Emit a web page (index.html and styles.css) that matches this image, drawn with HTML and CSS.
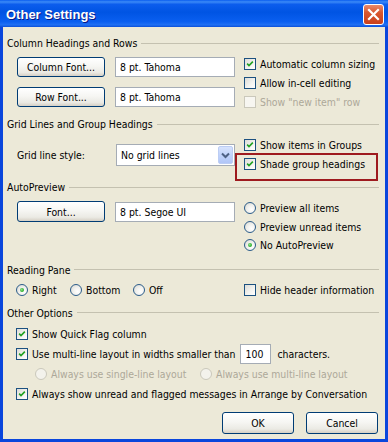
FILE: index.html
```html
<!DOCTYPE html>
<html>
<head>
<meta charset="utf-8">
<title>Other Settings</title>
<link rel="stylesheet" href="styles.css">
</head>
<body>
<div class="window">
  <div class="titlebar">
    <span class="title">Other Settings</span>
    <div class="close"><svg width="13" height="13" viewBox="0 0 13 13"><path d="M2 2 L11 11 M11 2 L2 11" stroke="#fff" stroke-width="2.2" stroke-linecap="square"/></svg></div>
  </div>
  <div class="content">
    <section class="group g1">
      <div class="ghead"><span>Column Headings and Rows</span></div>
      <div class="gbody">
        <div class="left stack1">
          <div class="frow"><button class="btn">Column Font...</button><div class="field">8 pt. Tahoma</div></div>
          <div class="frow"><button class="btn">Row Font...</button><div class="field">8 pt. Tahoma</div></div>
        </div>
        <div class="right r1">
          <div class="opt"><span class="cb"><svg viewBox="0 0 12 12"><path d="M2.6 5.6 L4.8 7.9 L9.4 3.2" fill="none" stroke="#21a121" stroke-width="1.9"/></svg></span>Automatic column sizing</div>
          <div class="opt"><span class="cb"></span>Allow in-cell editing</div>
          <div class="opt disabled"><span class="cb"></span>Show "new item" row</div>
        </div>
      </div>
    </section>

    <section class="group g2">
      <div class="ghead"><span>Grid Lines and Group Headings</span></div>
      <div class="gbody">
        <div class="left grid-left">
          <span class="lbl">Grid line style:</span>
          <div class="select"><span>No grid lines</span><span class="arrow"><svg width="9" height="7" viewBox="0 0 9 7"><path d="M1 1.5 L4.5 5 L8 1.5" fill="none" stroke="#4d6185" stroke-width="2"/></svg></span></div>
        </div>
        <div class="right r2">
          <div class="opt"><span class="cb"><svg viewBox="0 0 12 12"><path d="M2.6 5.6 L4.8 7.9 L9.4 3.2" fill="none" stroke="#21a121" stroke-width="1.9"/></svg></span>Show items in Groups</div>
          <div class="opt"><span class="cb"><svg viewBox="0 0 12 12"><path d="M2.6 5.6 L4.8 7.9 L9.4 3.2" fill="none" stroke="#21a121" stroke-width="1.9"/></svg></span>Shade group headings</div>
        </div>
      </div>
    </section>

    <section class="group g3">
      <div class="ghead"><span>AutoPreview</span></div>
      <div class="gbody">
        <div class="left stack3">
          <div class="frow"><button class="btn tall">Font...</button><div class="field">8 pt. Segoe UI</div></div>
        </div>
        <div class="right r3">
          <div class="opt"><span class="rd"></span>Preview all items</div>
          <div class="opt"><span class="rd"></span>Preview unread items</div>
          <div class="opt"><span class="rd on"></span>No AutoPreview</div>
        </div>
      </div>
    </section>

    <section class="group g4">
      <div class="ghead"><span>Reading Pane</span></div>
      <div class="gbody">
        <div class="left panes">
          <div class="opt w-right"><span class="rd on"></span>Right</div>
          <div class="opt w-bottom"><span class="rd"></span>Bottom</div>
          <div class="opt"><span class="rd"></span>Off</div>
        </div>
        <div class="right r4">
          <div class="opt"><span class="cb"></span>Hide header information</div>
        </div>
      </div>
    </section>

    <section class="group g5">
      <div class="ghead"><span>Other Options</span></div>
      <div class="gbody col">
        <div class="opt line"><span class="cb"><svg viewBox="0 0 12 12"><path d="M2.6 5.6 L4.8 7.9 L9.4 3.2" fill="none" stroke="#21a121" stroke-width="1.9"/></svg></span>Show Quick Flag column</div>
        <div class="opt line"><span class="cb"><svg viewBox="0 0 12 12"><path d="M2.6 5.6 L4.8 7.9 L9.4 3.2" fill="none" stroke="#21a121" stroke-width="1.9"/></svg></span>Use multi-line layout in widths smaller than<span class="num">100</span><span class="after">characters.</span></div>
        <div class="line sub">
          <div class="opt disabled w-single"><span class="rd"></span>Always use single-line layout</div>
          <div class="opt disabled"><span class="rd"></span>Always use multi-line layout</div>
        </div>
        <div class="opt line"><span class="cb"><svg viewBox="0 0 12 12"><path d="M2.6 5.6 L4.8 7.9 L9.4 3.2" fill="none" stroke="#21a121" stroke-width="1.9"/></svg></span>Always show unread and flagged messages in Arrange by Conversation</div>
      </div>
    </section>

    <div class="footer">
      <button class="btn dlg">OK</button>
      <button class="btn dlg">Cancel</button>
    </div>
  </div>
  <div class="highlight"></div>
</div>
</body>
</html>
```

FILE: styles.css
```css
html, body {
  margin: 0;
  padding: 0;
  background: #0842d8;
}

.window {
  position: relative;
  width: 388px;
  height: 442px;
  box-sizing: border-box;
  border-left: 3px solid #0a46dc;
  border-right: 3px solid #0a46dc;
  border-bottom: 3px solid #0a46dc;
  background: #ece9d8;
  font-family: "DejaVu Sans Condensed", "DejaVu Sans", sans-serif;
  font-size: 10.4px;
  color: #000;
  display: flex;
  flex-direction: column;
}

.titlebar {
  height: 27px;
  margin: 0 -3px;
  padding: 0 4px 0 6px;
  display: flex;
  align-items: center;
  justify-content: space-between;
  background: linear-gradient(180deg, #0a5def 0%, #3b8af7 7%, #0c5ded 16%, #0054e3 45%, #0a5ff0 80%, #2070f4 92%, #0a4fd8 100%);
}

.title {
  font-family: "Liberation Sans", Arial, sans-serif;
  font-weight: bold;
  font-size: 13px;
  color: #fff;
  text-shadow: 1px 1px 0 #0a1883;
  padding-top: 1px;
}

.close {
  width: 21px;
  height: 21px;
  box-sizing: border-box;
  border: 1px solid #fff;
  border-radius: 3px;
  background: linear-gradient(180deg, #ea8a6b 0%, #d9572f 40%, #c8401c 100%);
  display: flex;
  align-items: center;
  justify-content: center;
  margin-top: 1px;
}

.content {
  flex: 1;
  display: flex;
  flex-direction: column;
}

.group {
  padding: 0 6px 0 4px;
}

.ghead {
  height: 14px;
  display: flex;
  align-items: center;
  gap: 4px;
  line-height: 14px;
}

.ghead::after {
  content: "";
  flex: 1;
  height: 1px;
  background: #c4c1b0;
}

.gbody {
  display: flex;
  padding-left: 9px;
}

.gbody.col {
  flex-direction: column;
}

.left {
  width: 228px;
  flex: none;
}

.right {
  flex: 1;
  display: flex;
  flex-direction: column;
}

.g1 { margin-top: 9px; }
.g2 { margin-top: 6px; }
.g3 { margin-top: 7px; }
.g4 { margin-top: 8px; }
.g5 { margin-top: 7px; }

.stack1 {
  padding-top: 7px;
  display: flex;
  flex-direction: column;
  gap: 10px;
}

.r1 { padding-top: 4px; }
.r1 .opt { height: 19px; }

.grid-left {
  padding-top: 6px;
  display: flex;
  align-items: center;
}

.r2 { padding-top: 5px; }
.r2 .opt { height: 18.5px; }

.stack3 { padding-top: 7px; }

.r3 { padding-top: 5px; }
.r3 .opt { height: 18.5px; }

.panes {
  padding-top: 4px;
  display: flex;
  height: 18px;
}

.r4 { padding-top: 4px; }
.r4 .opt { height: 18px; }

.g5 .gbody { padding-top: 4px; }

.frow {
  display: flex;
  align-items: center;
  gap: 10px;
  padding-left: 1px;
}

.btn {
  font: inherit;
  color: #000;
  width: 88px;
  height: 20px;
  padding: 0;
  box-sizing: border-box;
  border: 1px solid #003c74;
  border-radius: 3px;
  background: linear-gradient(180deg, #ffffff 0%, #f6f6f3 45%, #ebeae4 80%, #d6d0c5 100%);
}

.btn.tall { height: 21px; }

.field {
  width: 120px;
  height: 20px;
  box-sizing: border-box;
  border: 1px solid #a5acb5;
  background: #fff;
  padding-left: 4px;
  display: flex;
  align-items: center;
}

.lbl {
  width: 99px;
  padding-left: 1px;
}

.select {
  width: 119px;
  height: 22px;
  box-sizing: border-box;
  border: 1px solid #a5acb5;
  background: #fff;
  display: flex;
  align-items: center;
  justify-content: space-between;
  padding: 1px 1px 1px 4px;
}

.arrow {
  width: 15px;
  height: 18px;
  box-sizing: border-box;
  border-radius: 2px;
  border: 1px solid #bccdf4;
  background: linear-gradient(180deg, #d7e3fd 0%, #c1d3fb 50%, #b1c6f7 100%);
  display: flex;
  align-items: center;
  justify-content: center;
}

.opt {
  display: flex;
  align-items: center;
  white-space: nowrap;
}

.opt.disabled { color: #aca899; }

.cb {
  width: 12px;
  height: 12px;
  box-sizing: border-box;
  border: 1px solid #1c5180;
  background: linear-gradient(135deg, #dcdcd7 0%, #f4f4f1 60%, #ffffff 100%);
  margin-right: 4px;
  flex: none;
  display: flex;
}

.cb svg {
  width: 10px;
  height: 10px;
}

.disabled .cb {
  border-color: #cac8bb;
  background: #f7f6f1;
}

.rd {
  width: 12px;
  height: 12px;
  box-sizing: border-box;
  border-radius: 50%;
  border: 1px solid #2b5c8a;
  background: radial-gradient(circle at 65% 65%, #ffffff 0%, #f1f1ee 45%, #d6d5cc 100%);
  margin-right: 4px;
  flex: none;
  display: flex;
  align-items: center;
  justify-content: center;
}

.rd.on::after {
  content: "";
  width: 4px;
  height: 4px;
  border-radius: 50%;
  background: radial-gradient(circle at 40% 40%, #8fe08f 0%, #31b231 60%, #1f9a1f 100%);
}

.disabled .rd {
  border-color: #cac8bb;
  background: #f3f2ec;
}

.w-right { width: 54px; }
.w-bottom { width: 63px; }

.line { height: 20px; }

.num {
  width: 31px;
  height: 20px;
  box-sizing: border-box;
  border: 1px solid #a5acb5;
  background: #fff;
  display: flex;
  align-items: center;
  padding-left: 4px;
  margin-left: 5px;
}

.after { margin-left: 6px; }

.sub {
  display: flex;
  align-items: center;
  padding-left: 19px;
}

.w-single { width: 165px; }

.footer {
  display: flex;
  justify-content: flex-end;
  gap: 12px;
  padding-right: 7px;
  margin-top: 8px;
}

.btn.dlg {
  width: 72px;
  height: 22px;
}

.highlight {
  position: absolute;
  left: 232px;
  top: 153px;
  width: 143px;
  height: 28px;
  box-sizing: border-box;
  border: 2px solid #9e1a1e;
}
```
